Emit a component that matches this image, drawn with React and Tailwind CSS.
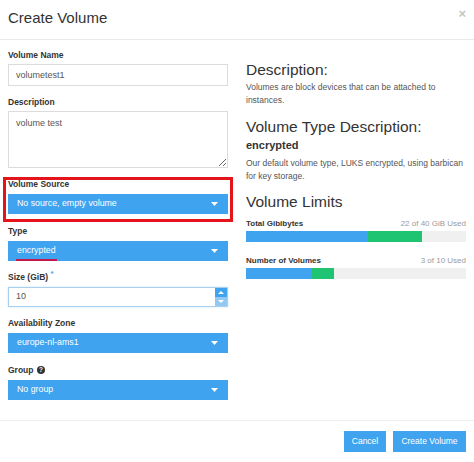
import { useState } from 'react'

const font = { fontFamily: '"Liberation Sans", Arial, sans-serif' }

function Caret() {
  return (
    <svg width="7" height="4" viewBox="0 0 7 4" className="shrink-0">
      <path d="M0 0 L7 0 L3.5 4 Z" fill="#fff" />
    </svg>
  )
}

function Label({ children }) {
  return <div className="text-[8.5px] leading-[10px] font-bold text-[#333] mb-[5px]">{children}</div>
}

function Select({ value, underline }) {
  return (
    <div className="h-[20px] bg-[#3fa3ef] flex items-center justify-between pl-[9px] pr-[10px] text-white text-[8.8px]">
      {underline ? (
        <span className="relative">
          {value}
          <span className="absolute left-[-1px] right-[-1px] bottom-[-3px] h-[1.5px] bg-[#c2184b]" />
        </span>
      ) : (
        <span>{value}</span>
      )}
      <Caret />
    </div>
  )
}

function Bar({ label, used, blue, green }) {
  return (
    <div>
      <div className="flex justify-between items-center text-[8px] leading-[10px]">
        <span className="font-bold text-[#333]">{label}</span>
        <span className="text-[#9a9a9a]">{used}</span>
      </div>
      <div className="mt-[2px] h-[11px] bg-[#f0f0f0] flex">
        <div className="h-full bg-[#3fa3ef]" style={{ width: blue }} />
        <div className="h-full bg-[#1ec471]" style={{ width: green }} />
      </div>
    </div>
  )
}

export default function App() {
  const [name, setName] = useState('volumetest1')
  const [desc, setDesc] = useState('volume test')
  const [size, setSize] = useState('10')

  return (
    <div className="w-[474px] h-[462px] bg-white flex flex-col overflow-hidden" style={font}>
      <div className="h-[40px] shrink-0 border-b border-[#e9e9e9] flex items-start justify-between pt-[8px] pl-[8px] pr-[8px]">
        <h1 className="text-[15px] leading-[20px] text-[#333]">Create Volume</h1>
        <span className="text-[13px] leading-[12px] font-bold text-[#c4c4c4]">×</span>
      </div>

      <div className="flex-1 flex gap-[18px] px-[8px] pt-[10px]">
        <div className="w-[220px] shrink-0">
          <div className="mb-[11px]">
            <div className="text-[8.5px] leading-[10px] font-bold text-[#333] mb-[4px]">Volume Name</div>
            <input
              value={name}
              onChange={e => setName(e.target.value)}
              className="block w-full h-[22px] border border-[#dcdcdc] px-[7px] text-[9px] text-[#555] outline-none"
            />
          </div>

          <div className="mb-[11px]">
            <div className="text-[8.5px] leading-[10px] font-bold text-[#333] mb-[4px]">Description</div>
            <textarea
              value={desc}
              onChange={e => setDesc(e.target.value)}
              className="block w-full h-[57px] border border-[#dcdcdc] px-[7px] py-[5px] text-[9px] text-[#555] outline-none resize-y"
            />
          </div>

          <div className="relative mb-[12px]">
            <div className="absolute left-[-5px] right-[-5px] top-[-2px] bottom-[-8px] border-[3px] border-[#e3141c] pointer-events-none" />
            <Label>Volume Source</Label>
            <Select value="No source, empty volume" />
          </div>

          <div className="mb-[11px]">
            <Label>Type</Label>
            <Select value="encrypted" underline />
          </div>

          <div className="mb-[11px]">
            <Label>
              Size (GiB) <sup className="text-[#3fa3ef] text-[8px] leading-none">*</sup>
            </Label>
            <div className="h-[20px] border border-[#a9d0f1] shadow-[0_0_2px_#cde4f8] flex">
              <input
                value={size}
                onChange={e => setSize(e.target.value)}
                className="block flex-1 min-w-0 px-[7px] text-[9px] text-[#555] outline-none"
              />
              <div className="w-[12px] flex flex-col">
                <div className="flex-1 bg-[#3fa3ef] flex items-center justify-center">
                  <svg width="6" height="3" viewBox="0 0 6 3"><path d="M0 3 L6 3 L3 0 Z" fill="#fff" /></svg>
                </div>
                <div className="flex-1 bg-[#93c8f3] flex items-center justify-center">
                  <svg width="6" height="3" viewBox="0 0 6 3"><path d="M0 0 L6 0 L3 3 Z" fill="#fff" /></svg>
                </div>
              </div>
            </div>
          </div>

          <div className="mb-[12px]">
            <Label>Availability Zone</Label>
            <Select value="europe-nl-ams1" />
          </div>

          <div>
            <Label>
              <span className="inline-flex items-center gap-[3px]">
                Group
                <svg width="8" height="8" viewBox="0 0 10 10">
                  <circle cx="5" cy="5" r="5" fill="#333" />
                  <text x="5" y="8" textAnchor="middle" fontSize="8" fontWeight="bold" fill="#fff" fontFamily="Liberation Sans, Arial, sans-serif">?</text>
                </svg>
              </span>
            </Label>
            <Select value="No group" />
          </div>
        </div>

        <div className="w-[220px] shrink-0 pt-[11px] text-[#555]">
          <h3 className="text-[15.5px] leading-[18px] text-[#333]">Description:</h3>
          <p className="mt-[2px] text-[8.5px] leading-[13px]">
            Volumes are block devices that can be attached to instances.
          </p>

          <h3 className="mt-[11px] text-[15.5px] leading-[18px] text-[#333]">Volume Type Description:</h3>
          <div className="mt-[3px] text-[11px] leading-[13px] font-bold text-[#333]">encrypted</div>
          <p className="mt-[5px] text-[8.5px] leading-[12.5px]">
            Our default volume type, LUKS encrypted, using barbican for key storage.
          </p>

          <h3 className="mt-[11px] text-[15.5px] leading-[18px] text-[#333]">Volume Limits</h3>
          <div className="mt-[8px]">
            <Bar label="Total Gibibytes" used="22 of 40 GiB Used" blue="55.5%" green="24.5%" />
          </div>
          <div className="mt-[14px]">
            <Bar label="Number of Volumes" used="3 of 10 Used" blue="30%" green="10%" />
          </div>
        </div>
      </div>

      <div className="h-[42px] shrink-0 border-t border-[#eeeeee] flex items-start justify-end gap-[7px] pt-[10px] pr-[8px]">
        <button className="h-[21px] w-[42px] bg-[#3fa3ef] text-white text-[8.5px]">Cancel</button>
        <button className="h-[21px] w-[73px] bg-[#3fa3ef] text-white text-[8.5px]">Create Volume</button>
      </div>
    </div>
  )
}
